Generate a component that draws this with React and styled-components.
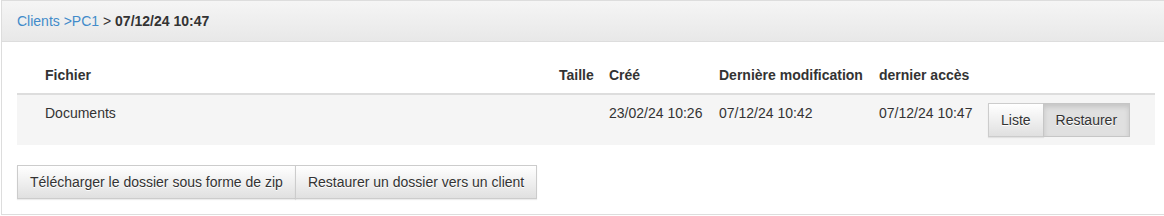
import React from "react"
import styled, { createGlobalStyle } from "styled-components"

const GlobalStyle = createGlobalStyle`
  html, body {
    margin: 0;
    padding: 0;
    background: #fff;
    overflow: hidden;
  }
  body {
    font-family: "Liberation Sans", Arial, Helvetica, sans-serif;
    font-size: 14px;
    line-height: 20px;
    color: #333;
  }
`

const Page = styled.div`
  padding-left: 1px;
`

const Panel = styled.div`
  width: 1170px;
  border: 1px solid #ddd;
  background: #fff;
`

const PanelHeading = styled.div`
  padding: 10px 15px;
  background: linear-gradient(to bottom, #f5f5f5 0%, #e8e8e8 100%);
  border-bottom: 1px solid #ddd;
`

const Crumb = styled.a`
  color: #428bca;
  text-decoration: none;
`

const Current = styled.strong`
  font-weight: bold;
  color: #333;
`

const PanelBody = styled.div`
  padding: 15px;
`

const Table = styled.table`
  width: 1138px;
  table-layout: fixed;
  border-collapse: collapse;
  border-spacing: 0;
  margin-bottom: 20px;
`

const Th = styled.th`
  text-align: left;
  font-weight: bold;
  padding: 8px;
  padding-left: ${(p) => (p.$first ? "28px" : "8px")};
  vertical-align: bottom;
  border-bottom: 2px solid #ddd;
  white-space: nowrap;
`

const Row = styled.tr`
  background: #f5f5f5;
`

const Td = styled.td`
  padding: 8px;
  padding-left: ${(p) => (p.$first ? "28px" : "8px")};
  vertical-align: top;
  white-space: nowrap;
`

const BtnGroup = styled.div`
  display: inline-flex;
`

const Button = styled.button`
  font-family: inherit;
  font-size: 14px;
  line-height: 20px;
  color: #333;
  padding: 6px 12px;
  margin: 0;
  margin-left: ${(p) => (p.$joined ? "-1px" : "0")};
  border: 1px solid #ccc;
  border-radius: 0;
  text-shadow: 0 1px 0 #fff;
  background: ${(p) =>
    p.$active ? "#e0e0e0" : "linear-gradient(to bottom, #fff 0%, #e0e0e0 100%)"};
  border-color: ${(p) => (p.$active ? "#c6c6c6" : "#ccc")};
  box-shadow: ${(p) =>
    p.$active
      ? "inset 0 3px 5px rgba(0,0,0,.125)"
      : "inset 0 1px 0 rgba(255,255,255,.15), 0 1px 1px rgba(0,0,0,.075)"};
  cursor: pointer;
`

const App = () => (
  <Page>
    <GlobalStyle />
    <Panel>
      <PanelHeading>
        <Crumb href="#">Clients</Crumb> <Crumb href="#">&gt;PC1</Crumb> &gt;{" "}
        <Current>07/12/24 10:47</Current>
      </PanelHeading>
      <PanelBody>
        <Table>
          <colgroup>
            <col style={{ width: 534 }} />
            <col style={{ width: 50 }} />
            <col style={{ width: 110 }} />
            <col style={{ width: 160 }} />
            <col style={{ width: 109 }} />
            <col style={{ width: 175 }} />
          </colgroup>
          <thead>
            <tr>
              <Th $first>Fichier</Th>
              <Th>Taille</Th>
              <Th>Créé</Th>
              <Th>Dernière modification</Th>
              <Th>dernier accès</Th>
              <Th></Th>
            </tr>
          </thead>
          <tbody>
            <Row>
              <Td $first>Documents</Td>
              <Td></Td>
              <Td>23/02/24 10:26</Td>
              <Td>07/12/24 10:42</Td>
              <Td>07/12/24 10:47</Td>
              <Td>
                <BtnGroup>
                  <Button>Liste</Button>
                  <Button $joined $active>Restaurer</Button>
                </BtnGroup>
              </Td>
            </Row>
          </tbody>
        </Table>
        <BtnGroup>
          <Button>Télécharger le dossier sous forme de zip</Button>
          <Button $joined>Restaurer un dossier vers un client</Button>
        </BtnGroup>
      </PanelBody>
    </Panel>
  </Page>
)

export default App
